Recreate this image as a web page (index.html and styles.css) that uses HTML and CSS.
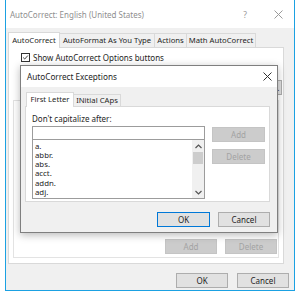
FILE: index.html
```html
<!DOCTYPE html>
<html lang="en">
<head>
<meta charset="utf-8">
<title>AutoCorrect</title>
<link rel="stylesheet" href="styles.css">
</head>
<body>
<div class="window">
  <div class="titlebar">
    <span class="title">AutoCorrect: English (United States)</span>
    <span class="help">?</span>
    <svg class="close" width="9" height="9" viewBox="0 0 9 9"><path d="M0.5 0.5L8.5 8.5M8.5 0.5L0.5 8.5" stroke="#9a9a9a" stroke-width="1" fill="none"/></svg>
  </div>
  <div class="wbody">
    <div class="tabs">
      <div class="tab active t-ac">AutoCorrect</div>
      <div class="tab t-af">AutoFormat As You Type</div>
      <div class="tab t-act">Actions</div>
      <div class="tab t-math">Math AutoCorrect</div>
    </div>
    <div class="panel">
      <div class="check">
        <span class="box"><svg width="9" height="9" viewBox="0 0 9 9"><path d="M1.5 4.5L3.5 6.5L7.5 2" stroke="#222" stroke-width="1.1" fill="none"/></svg></span>
        <span>Show AutoCorrect Options buttons</span>
      </div>
      <div class="exc-row"><div class="btn">Exceptions...</div></div>
      <div class="replist">
        <div class="listbtns">
          <div class="btn disabled">Add</div>
          <div class="btn disabled">Delete</div>
        </div>
      </div>
    </div>
    <div class="footer">
      <div class="btn">OK</div>
      <div class="btn">Cancel</div>
    </div>
  </div>

  <div class="dialog">
    <div class="dtitle">
      <span>AutoCorrect Exceptions</span>
      <svg class="dclose" width="9" height="9" viewBox="0 0 9 9"><path d="M0.5 0.5L8.5 8.5M8.5 0.5L0.5 8.5" stroke="#333" stroke-width="1" fill="none"/></svg>
    </div>
    <div class="dbody">
      <div class="tabs dtabs">
        <div class="tab active t-first">First Letter</div>
        <div class="tab t-init">INitial CAps</div>
      </div>
      <div class="dpanel">
        <div class="label">Don't capitalize after:</div>
        <div class="dgrid">
          <div class="entry">
            <div class="input"></div>
            <div class="list">
              <div class="items">
                <div>a.</div>
                <div>abbr.</div>
                <div>abs.</div>
                <div>acct.</div>
                <div>addn.</div>
                <div>adj.</div>
              </div>
              <div class="scroll">
                <svg class="arrow" width="7" height="5" viewBox="0 0 7 5"><path d="M0.5 4L3.5 1L6.5 4" stroke="#555" stroke-width="1.2" fill="none"/></svg>
                <div class="thumb"></div>
                <svg class="arrow down" width="7" height="5" viewBox="0 0 7 5"><path d="M0.5 1L3.5 4L6.5 1" stroke="#555" stroke-width="1.2" fill="none"/></svg>
              </div>
            </div>
          </div>
          <div class="side">
            <div class="btn disabled">Add</div>
            <div class="btn disabled">Delete</div>
          </div>
        </div>
      </div>
      <div class="dfoot">
        <div class="btn default">OK</div>
        <div class="btn">Cancel</div>
      </div>
    </div>
  </div>
</div>
</body>
</html>
```

FILE: styles.css
```css
* { box-sizing: border-box; }
html, body { margin: 0; padding: 0; background: #ffffff; }
body {
  font-family: "Noto Sans", "Open Sans", sans-serif;
  font-size: 8px;
  color: #1e1e1e;
  width: 300px;
  height: 298px;
  overflow: hidden;
}
.window {
  position: relative;
  margin-left: 5px;
  width: 290px;
  height: 291px;
  border: 1px solid #1ba1e2;
  border-top: none;
  background: #f0f0f0;
}
.titlebar {
  height: 28px;
  background: #ffffff;
  display: flex;
  align-items: center;
  padding: 1px 0 0 4px;
}
.title { color: #8f8f8f; font-size: 8px; }
.help { margin-left: auto; color: #9a9a9a; font-size: 8.5px; margin-right: 27px; }
.close { margin-right: 11px; }

.wbody { padding-top: 5px; }
.tabs { display: flex; align-items: flex-end; padding-left: 2px; height: 14px; }
.tab {
  height: 14px;
  line-height: 13px;
  padding: 0;
  text-align: center;
  font-size: 7.7px;
  border: 1px solid #d9d9d9;
  border-bottom: none;
  margin-left: -1px;
  background: #f0f0f0;
  white-space: nowrap;
}
.tab:first-child { margin-left: 0; }
.tab.active {
  background: #ffffff;
  height: 16px;
  line-height: 14px;
  position: relative;
  margin-bottom: -1px;
  z-index: 1;
}
.t-ac { width: 52px; }
.t-af { width: 96px; }
.t-act { width: 33px; }
.t-math { width: 70px; }
.t-first { width: 48px; }
.t-init { width: 48px; }

.panel {
  margin: 0 10px 0 2px;
  height: 217px;
  background: #ffffff;
  border: 1px solid #d9d9d9;
  padding: 0 4px 5px 4px;
  display: flex;
  flex-direction: column;
}
.check { display: flex; align-items: center; gap: 3px; padding: 4px 0 0 8px; height: 14px; flex-shrink: 0; }
.box { width: 9px; height: 9px; border: 1px solid #333; display: flex; align-items: center; justify-content: center; background: #fff; }
.box svg { display: block; }
.exc-row { display: flex; justify-content: flex-end; padding: 18px 0 0 0; margin-right: -3px; flex-shrink: 0; }
.replist {
  margin-top: 5px;
  flex: 1;
  border: 1px solid #e3e3e3;
  display: flex;
  flex-direction: column;
  justify-content: flex-end;
  padding: 0 1px 3px 0;
}
.listbtns { display: flex; justify-content: flex-end; gap: 8px; }

.btn {
  height: 15px;
  width: 52px;
  border: 1px solid #adadad;
  background: #e1e1e1;
  display: flex;
  align-items: center;
  justify-content: center;
  white-space: nowrap;
  color: #1e1e1e;
  flex-shrink: 0;
}
.btn.disabled { background: #cccccc; border-color: #c4c4c4; color: #a3a3a3; }
.btn.default { border-color: #0078d7; }
.footer { display: flex; justify-content: flex-end; gap: 9px; padding: 9px 5px 0 0; }

.dialog {
  position: absolute;
  left: 14px;
  top: 65px;
  width: 258px;
  height: 168px;
  border: 1px solid #7f7f7f;
  background: #f0f0f0;
  box-shadow: 0 2px 8px rgba(0, 0, 0, 0.28);
  z-index: 5;
}
.dtitle {
  height: 21px;
  background: #ffffff;
  display: flex;
  align-items: center;
  padding-left: 6px;
  font-size: 8.2px;
}
.dclose { margin-left: auto; margin-right: 5px; }
.dbody { padding: 5px 7px 0 4px; }
.dtabs { padding-left: 1px; height: 14px; }
.dtabs .tab { height: 12px; line-height: 11px; }
.dtabs .tab.active { height: 15px; line-height: 13px; }
.dpanel {
  height: 96px;
  background: #ffffff;
  border: 1px solid #d9d9d9;
  padding: 7px 0 3px 6px;
}
.label { height: 10px; line-height: 10px; }
.dgrid { display: flex; gap: 7px; margin-top: 2px; }
.entry { width: 173px; display: flex; flex-direction: column; }
.input { height: 14px; border: 1px solid #9c9c9c; background: #fff; }
.list {
  height: 59px;
  border: 1px solid #9c9c9c;
  border-top: none;
  display: flex;
  overflow: hidden;
}
.items { flex: 1; padding: 1.5px 0 0 2px; font-size: 7.8px; line-height: 9.3px; overflow: hidden; }
.scroll {
  width: 12px;
  background: #f0f0f0;
  display: flex;
  flex-direction: column;
  align-items: center;
}
.arrow { display: block; margin-top: 4px; }
.thumb { width: 10px; height: 12px; background: #cdcdcd; margin-top: 3px; }
.arrow.down { margin-top: auto; margin-bottom: 3px; }
.side { display: flex; flex-direction: column; gap: 7px; padding-top: 1px; }
.side .btn { width: 53px; }
.dfoot { display: flex; justify-content: flex-end; gap: 8px; padding-top: 10px; }
.dfoot .btn { width: 53px; }
.dfoot .btn + .btn { width: 52px; }
```
